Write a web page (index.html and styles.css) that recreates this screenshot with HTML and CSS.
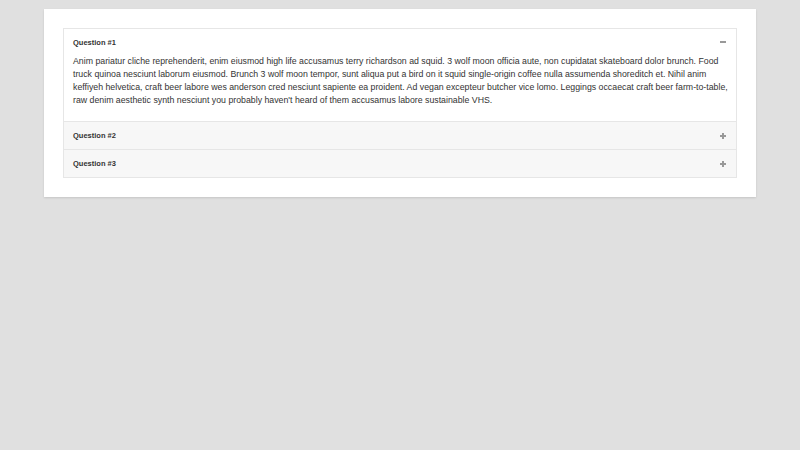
FILE: index.html
```html
<!DOCTYPE html>
<html>
<head>
<meta charset="utf-8">
<link rel="stylesheet" href="styles.css">
</head>
<body>
<div class="card">
  <div class="accordion">
    <div class="item open">
      <div class="head">
        <span class="title">Question #1</span>
        <span class="icon minus"></span>
      </div>
      <div class="body">Anim pariatur cliche reprehenderit, enim eiusmod high life accusamus terry richardson ad squid. 3 wolf moon officia aute, non cupidatat skateboard dolor brunch. Food truck quinoa nesciunt laborum eiusmod. Brunch 3 wolf moon tempor, sunt aliqua put a bird on it squid single-origin coffee nulla assumenda shoreditch et. Nihil anim keffiyeh helvetica, craft beer labore wes anderson cred nesciunt sapiente ea proident. Ad vegan excepteur butcher vice lomo. Leggings occaecat craft beer farm&#8209;to&#8209;table, raw denim aesthetic synth nesciunt you probably haven't heard of them accusamus labore sustainable VHS.</div>
    </div>
    <div class="item">
      <div class="head">
        <span class="title">Question #2</span>
        <span class="icon plus"></span>
      </div>
    </div>
    <div class="item">
      <div class="head">
        <span class="title">Question #3</span>
        <span class="icon plus"></span>
      </div>
    </div>
  </div>
</div>
</body>
</html>
```
FILE: styles.css
```css
html, body {
  margin: 0;
  padding: 0;
  background: #e0e0e0;
  font-family: "Liberation Sans", Arial, sans-serif;
}
body {
  padding: 9px 44px;
}
.card {
  background: #fff;
  padding: 19px;
  box-shadow: 0 1px 2px rgba(0,0,0,0.12);
}
.accordion {
  border: 1px solid #e6e6e6;
}
.item + .item {
  border-top: 1px solid #e6e6e6;
}
.head {
  display: flex;
  align-items: center;
  justify-content: space-between;
  height: 27px;
  padding: 0 10px 0 9px;
  background: #f7f7f7;
}
.item.open .head {
  height: 26px;
  background: #fff;
}
.title {
  font-size: 7.5px;
  font-weight: bold;
  color: #333;
}
.icon {
  position: relative;
  width: 6px;
  height: 6px;
}
.icon::before, .icon::after {
  content: "";
  position: absolute;
  background: #999;
}
.icon::before {
  left: 0;
  top: 2px;
  width: 6px;
  height: 2px;
}
.plus::after {
  left: 2px;
  top: 0;
  width: 2px;
  height: 6px;
}
.body {
  padding: 0 4px 14px 9px;
  font-size: 8.77px;
  line-height: 13px;
  color: #333;
}
```
